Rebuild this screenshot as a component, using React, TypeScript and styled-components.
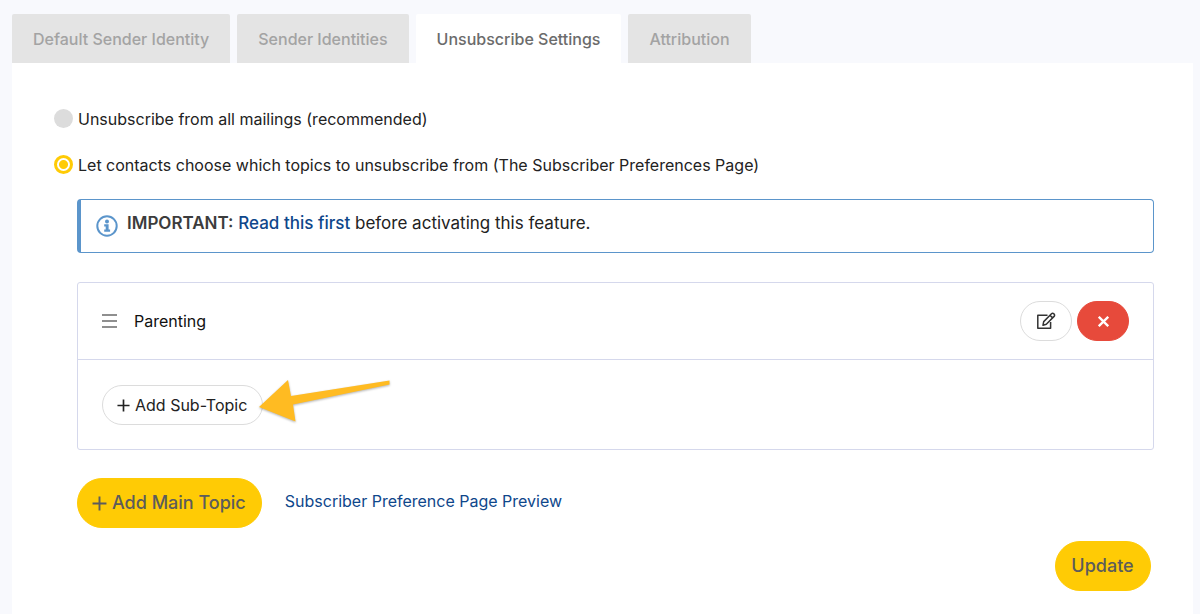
import React, { useState } from "react";
import styled, { createGlobalStyle } from "styled-components";

const GlobalStyle = createGlobalStyle`
  *, *::before, *::after { box-sizing: border-box; }
  body {
    margin: 0;
    background: #f8f9fd;
    color: #222;
    font-family: Inter, "Liberation Sans", sans-serif;
    font-size: 16px;
    line-height: 24px;
  }
  button, input { font: inherit; }
`;

const Page = styled.main`
  display: flex;
  flex-direction: column;
  min-height: 100vh;
  padding: 14px 7px 0 12px;
`;

const Tabs = styled.nav`
  display: flex;
  gap: 7px;
`;

const Tab = styled.button<{ $active?: boolean }>`
  height: 49px;
  padding: 1px 21px 0;
  border: 0;
  border-radius: 2px 2px 0 0;
  background: ${(p) => (p.$active ? "#fff" : "#e4e4e4")};
  color: ${(p) => (p.$active ? "#6b6b6b" : "#a3a3a3")};
  font-weight: 500;
  white-space: nowrap;
  cursor: pointer;
`;

const Panel = styled.section`
  flex: 1;
  padding: 44px 39px 23px 42px;
  background: #fff;
`;

const Option = styled.label`
  display: flex;
  align-items: center;
  gap: 5px;
  margin-bottom: 22px;
`;

const Radio = styled.input`
  appearance: none;
  flex: none;
  width: 19px;
  height: 19px;
  margin: 0 0 2px;
  border-radius: 50%;
  background: #dcdcdc;
  &:checked {
    border: 3px solid #ffcb05;
    background: radial-gradient(circle, #ffcb05 4px, #fff 5px);
  }
`;

const Topics = styled.div`
  padding-left: 23px;
`;

const Notice = styled.div`
  display: flex;
  align-items: flex-start;
  gap: 9px;
  min-height: 54px;
  margin-bottom: 29px;
  padding: 11px 15px;
  border: 1px solid #5b95cb;
  border-left-width: 4px;
  border-radius: 4px;
  font-size: 17px;
  color: #222;
  svg { margin-top: 4px; flex: none; }
  strong { font-weight: 600; color: #3c3c3c; }
  p { margin: 0; }
`;

const Link = styled.a`
  color: #0f478b;
  text-decoration: none;
`;

const NoticeLink = styled(Link)`
  font-weight: 500;
`;

const Card = styled.div`
  border: 1px solid #d5d8ec;
  border-radius: 3px;
`;

const CardHeader = styled.div`
  display: flex;
  align-items: center;
  gap: 5px;
  height: 77px;
  padding: 0 24px;
  border-bottom: 1px solid #d5d8ec;
`;

const TopicName = styled.span`
  flex: 1;
  padding-left: 12px;
  color: #111;
`;

const CardBody = styled.div`
  padding: 25px 24px 24px;
`;

const Anchor = styled.div`
  position: relative;
  width: max-content;
`;

const Arrow = styled.svg`
  position: absolute;
  left: 100%;
  top: -8px;
  margin-left: -8px;
  pointer-events: none;
  filter: drop-shadow(0 1px 1px rgba(0, 0, 0, 0.3));
`;

const Button = styled.button<{ $kind?: "danger" | "primary" }>`
  display: inline-flex;
  align-items: center;
  justify-content: center;
  gap: 5px;
  min-width: ${(p) => (p.$kind === "primary" ? 96 : 52)}px;
  height: ${(p) => (p.$kind === "primary" ? 50 : 40)}px;
  padding: 0 15px 0 14px;
  border: 1px solid #dcdcdc;
  border-color: ${(p) => (p.$kind === "primary" ? "#ffcb05" : p.$kind === "danger" ? "#e74a3b" : "#dcdcdc")};
  border-radius: 25px;
  background: ${(p) => (p.$kind === "primary" ? "#ffcb05" : p.$kind === "danger" ? "#e74a3b" : "#fff")};
  color: ${(p) => (p.$kind === "primary" ? "#5c5c5c" : p.$kind === "danger" ? "#fff" : "#222")};
  font-size: ${(p) => (p.$kind === "primary" ? 18 : 16)}px;
  font-weight: ${(p) => (p.$kind === "primary" ? 500 : 400)};
  white-space: nowrap;
  cursor: pointer;
`;

const IconButton = styled(Button)`
  padding: 0;
`;

const Actions = styled.div`
  display: flex;
  align-items: center;
  gap: 23px;
  margin-top: 28px;
`;

const PreviewLink = styled(Link)`
  padding-bottom: 4px;
`;

const Footer = styled.div`
  display: flex;
  justify-content: flex-end;
  margin-top: 13px;
  padding-right: 3px;
`;

const Plus = ({ size }: { size: number }) => (
  <svg width={size} height={size} viewBox="0 0 14 14" stroke="currentColor" strokeWidth="1.8" aria-hidden="true">
    <path d="M7 .5v13M.5 7h13" />
  </svg>
);

const InfoIcon = () => (
  <svg width="22" height="22" viewBox="0 0 22 22" fill="none" aria-hidden="true">
    <circle cx="11" cy="11" r="9.7" stroke="#5b95cb" strokeWidth="2" />
    <circle cx="11" cy="6.6" r="2" fill="#5b95cb" />
    <path d="M8.2 9.3h4.400v5.200h1.500v2.300H8.200v-2.300h1.500v-2.900H8.200z" fill="#5b95cb" />
  </svg>
);

const DragIcon = () => (
  <svg width="15" height="14" viewBox="0 0 15 14" stroke="#6b6b6b" strokeWidth="1.5" aria-hidden="true">
    <path d="M0 1h15M0 7h15M0 13h15" />
  </svg>
);

const EditIcon = () => (
  <svg width="20" height="18" viewBox="0 0 20 18" fill="none" stroke="#333" strokeWidth="1.5" strokeLinejoin="round" aria-hidden="true">
    <path d="M11.5 3.2H1.8v13h12.8V10" />
    <path d="M7 13.2l.7-3.6 7.8-7.8a1.6 1.6 0 0 1 2.3 0l.3.3a1.6 1.6 0 0 1 0 2.3l-7.8 7.8zM14 3.3l2.6 2.6" />
  </svg>
);

const CloseIcon = () => (
  <svg width="11" height="11" viewBox="0 0 11 11" stroke="#fff" strokeWidth="2.3" aria-hidden="true">
    <path d="M.8.8l9.4 9.4M10.2.8L.8 10.2" />
  </svg>
);

const tabs = ["Default Sender Identity", "Sender Identities", "Unsubscribe Settings", "Attribution"];

export default function App() {
  const [tab, setTab] = useState(2);
  const [mode, setMode] = useState("topics");
  return (
    <>
      <GlobalStyle />
      <Page>
        <Tabs>
          {tabs.map((name, i) => (
            <Tab key={name} type="button" $active={i === tab} onClick={() => setTab(i)}>
              {name}
            </Tab>
          ))}
        </Tabs>
        <Panel>
          <Option>
            <Radio type="radio" name="mode" checked={mode === "all"} onChange={() => setMode("all")} />
            Unsubscribe from all mailings (recommended)
          </Option>
          <Option>
            <Radio type="radio" name="mode" checked={mode === "topics"} onChange={() => setMode("topics")} />
            Let contacts choose which topics to unsubscribe from (The Subscriber Preferences Page)
          </Option>
          <Topics>
            <Notice>
              <InfoIcon />
              <p>
                <strong>IMPORTANT:</strong> <NoticeLink href="#read">Read this first</NoticeLink> before activating this
                feature.
              </p>
            </Notice>
            <Card>
              <CardHeader>
                <DragIcon />
                <TopicName>Parenting</TopicName>
                <IconButton type="button" aria-label="Edit topic">
                  <EditIcon />
                </IconButton>
                <IconButton type="button" $kind="danger" aria-label="Delete topic">
                  <CloseIcon />
                </IconButton>
              </CardHeader>
              <CardBody>
                <Anchor>
                  <Button type="button">
                    <Plus size={13} />
                    Add Sub-Topic
                  </Button>
                  <Arrow width="140" height="50" viewBox="0 0 140 50" aria-hidden="true">
                    <path d="M4 30L33 3l3 16L134.500 3.500v4L38 27.500l2.500 17z" fill="#ffbb22" />
                  </Arrow>
                </Anchor>
              </CardBody>
            </Card>
            <Actions>
              <Button type="button" $kind="primary">
                <Plus size={15} />
                Add Main Topic
              </Button>
              <PreviewLink href="#preview">Subscriber Preference Page Preview</PreviewLink>
            </Actions>
            <Footer>
              <Button type="button" $kind="primary">Update</Button>
            </Footer>
          </Topics>
        </Panel>
      </Page>
    </>
  );
}
